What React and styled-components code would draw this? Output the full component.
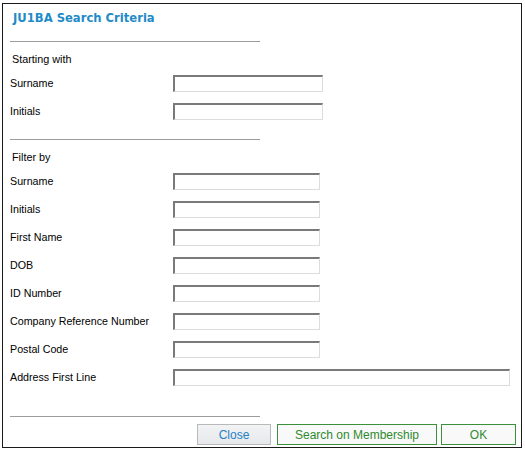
import React from 'react';
import styled, { createGlobalStyle } from 'styled-components';

const GlobalStyle = createGlobalStyle`
body {
  margin: 0;
  background: #ffffff;
  font-family: "Liberation Sans", Arial, sans-serif;
}
*, *::before, *::after {
  box-sizing: border-box;
}
`;

const Dialog = styled.div`
width: 520px;
height: 445px;
margin: 3px 0 0 2px;
border: 1px solid #1a1a1a;
padding: 0 5px 0 6px;
display: flex;
flex-direction: column;
background: #ffffff;
`;

const Header = styled.div`
height: 27px;
display: flex;
align-items: center;
padding-left: 4px;
`;

const Title = styled.h1`
margin: 0;
font-family: "DejaVu Sans", Verdana, sans-serif;
font-size: 11.6px;
font-weight: bold;
color: #1f8bc7;
`;

const Rule = styled.div`
width: 250px;
height: 1px;
margin-top: ${p => p.$top}px;
margin-left: 1px;
background: #9c9c9c;
flex-shrink: 0;
`;

const SectionTitle = styled.div`
height: 27px;
padding-top: 10px;
padding-left: 3px;
font-size: 10.8px;
line-height: 14px;
color: #000;
`;

const Row = styled.div`
height: 28px;
display: grid;
grid-template-columns: 164px 1fr;
align-items: center;
`;

const Label = styled.label`
font-size: 10.7px;
color: #000;
padding-left: 1px;
`;

const Field = styled.input`
width: ${p => p.$w}px;
height: 17px;
border-style: solid;
border-width: 2px 1px 1px 2px;
border-color: #7a7a7a #dcdcdc #dcdcdc #7a7a7a;
padding: 0 3px;
font-family: "Liberation Sans", Arial, sans-serif;
font-size: 11px;
outline: none;
`;

const Footer = styled.div`
margin-top: 7px;
display: flex;
justify-content: flex-end;
gap: 6px;
`;

const Button = styled.button`
width: ${p => p.$w}px;
height: 21px;
padding: 0;
font-family: "Liberation Sans", Arial, sans-serif;
font-size: 12px;
cursor: pointer;
border: 1px solid ${p => (p.$primary ? '#3b913b' : '#b9b9b9')};
color: ${p => (p.$primary ? '#2f8a2f' : '#2381c4')};
background: ${p => (p.$primary ? '#f9f9f9' : 'linear-gradient(#f2f3f5, #e6e8eb)')};
`;

const startFields = ['Surname', 'Initials'];
const filterFields = [
  ['Surname', 147],
  ['Initials', 147],
  ['First Name', 147],
  ['DOB', 147],
  ['ID Number', 147],
  ['Company Reference Number', 147],
  ['Postal Code', 147],
  ['Address First Line', 337],
];

const App = () => {
  return (
    <>
      <GlobalStyle />
      <Dialog>
        <Header>
          <Title>JU1BA Search Criteria</Title>
        </Header>

        <Rule $top={10} />
        <SectionTitle>Starting with</SectionTitle>
        {startFields.map(name => (
          <Row key={'s' + name}>
            <Label>{name}</Label>
            <Field $w={150} />
          </Row>
        ))}

        <Rule $top={14} />
        <SectionTitle>Filter by</SectionTitle>
        {filterFields.map(([name, w]) => (
          <Row key={'f' + name}>
            <Label>{name}</Label>
            <Field $w={w} />
          </Row>
        ))}

        <Rule $top={25} />
        <Footer>
          <Button $w={74}>Close</Button>
          <Button $w={160} $primary>Search on Membership</Button>
          <Button $w={75} $primary style={{ marginLeft: -2 }}>OK</Button>
        </Footer>
      </Dialog>
    </>
  );
};

export default App;
